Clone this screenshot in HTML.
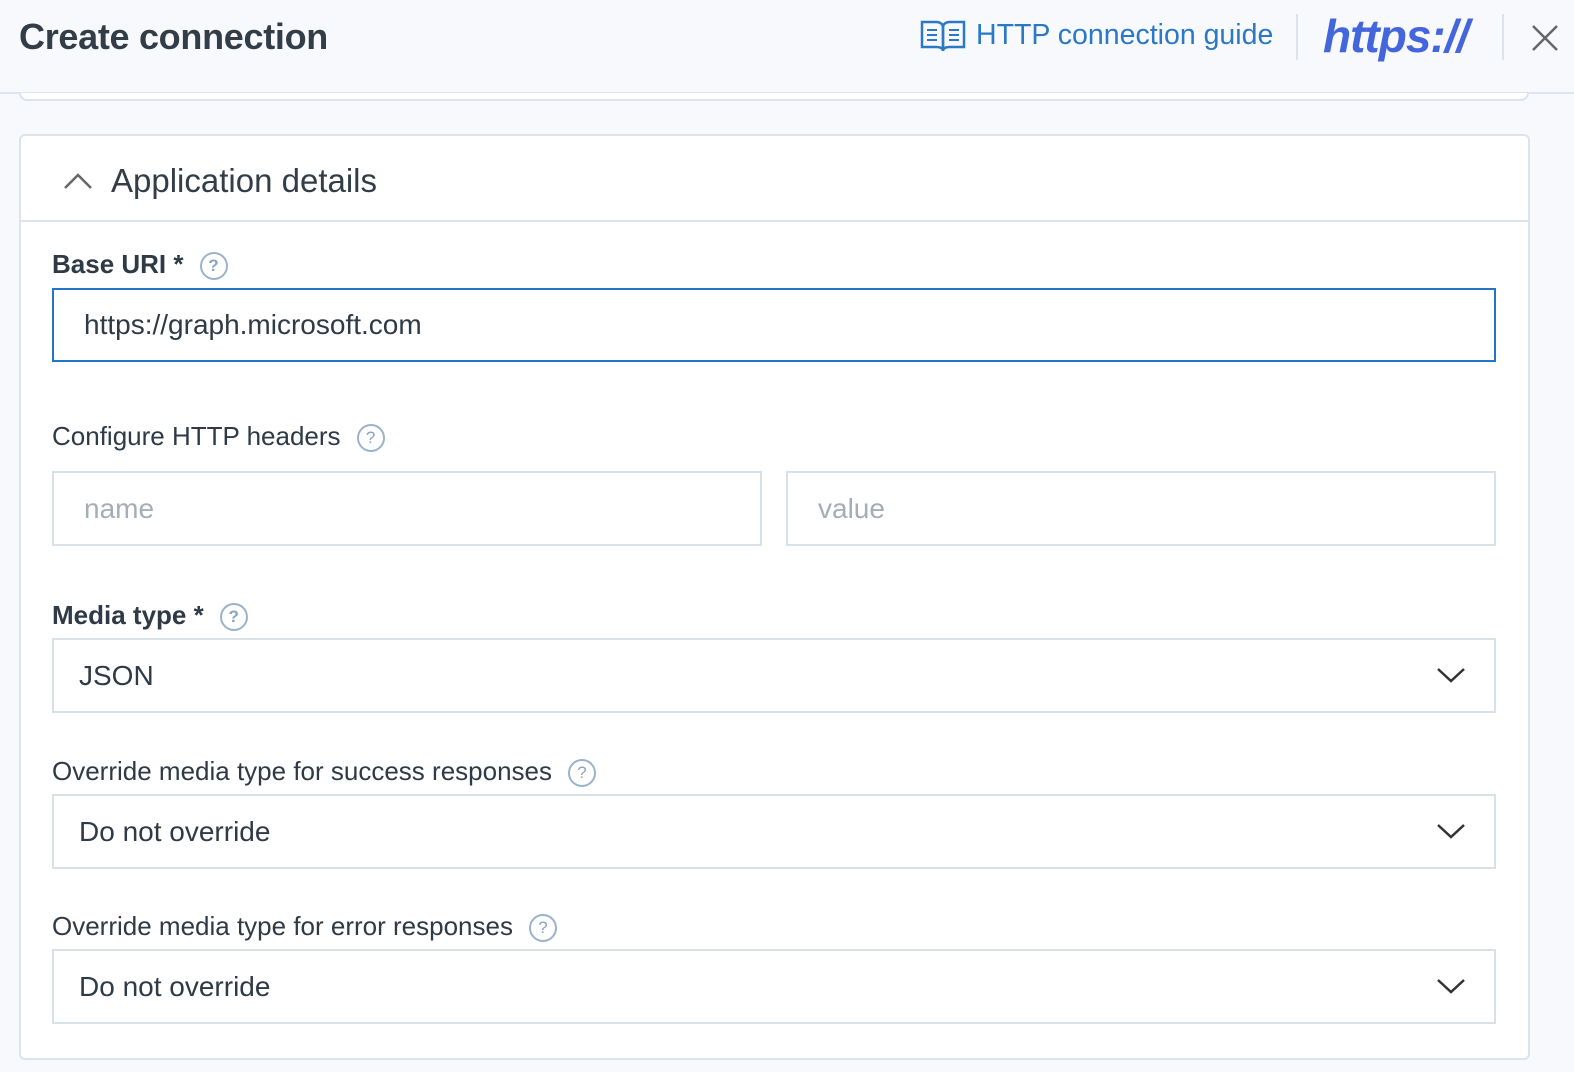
<!DOCTYPE html>
<html style="overflow:hidden"><head><style>
*{box-sizing:border-box;margin:0;padding:0}
html,body{width:1574px;height:1072px;overflow:hidden}
body{background:#f7f9fd;font-family:"Liberation Sans",sans-serif;color:#2e3a46;position:relative}
.a{position:absolute}
.title{left:19px;top:16px;font-size:36px;font-weight:bold;color:#333d48;letter-spacing:-0.3px}
.hdrline{left:0;top:92px;width:1574px;height:2px;background:#dde5ee}
.prev{left:19px;top:93px;width:1510px;height:8px;border:2px solid #dbe4ed;border-top:none;border-radius:0 0 8px 8px;background:#fff}
.card{left:19px;top:134px;width:1511px;height:926px;background:#fff;border:2px solid #dbe4ed;border-radius:6px}
.sep{left:19px;top:220px;width:1511px;height:2px;background:#dbe4ed}
.lbl{font-size:26px;color:#2e3a46}
.b{font-weight:bold}
.q{display:inline-block;width:28px;height:28px;border:2px solid #9ab3cc;border-radius:50%;color:#8aa3bc;font-size:17px;text-align:center;line-height:24px;vertical-align:middle;margin-left:16px}
.inp{border:2px solid #d8e0e8;background:#fff;font-size:28px;padding-left:30px;display:flex;align-items:center}
.sel{padding-left:25px}
.chev{position:absolute;right:28px;top:26px}
</style></head><body>
<div class="a title">Create connection</div>
<svg class="a" style="left:920px;top:18px" width="46" height="36" viewBox="0 0 46 36" fill="none" stroke="#2a78c6" stroke-width="2.5"><path d="M2 4h14c4 0 7 2 7 5v24c0-3-3-4-7-4H2z"/><path d="M44 4H30c-4 0-7 2-7 5v24c0-3 3-4 7-4h14z"/><path d="M7 12h10M7 17h10M7 22h10M29 12h10M29 17h10M29 22h10" stroke-width="2"/></svg>
<div class="a" style="left:976px;top:19px;font-size:28.5px;color:#2a78c6">HTTP connection guide</div>
<div class="a" style="left:1296px;top:14px;width:2px;height:46px;background:#dde3ea"></div>
<div class="a" style="left:1323px;top:9px;font-size:46px;font-weight:bold;font-style:italic;color:#4466dd;letter-spacing:-1px">https://</div>
<div class="a" style="left:1502px;top:14px;width:2px;height:46px;background:#dde3ea"></div>
<svg class="a" style="left:1531px;top:24px" width="28" height="28" viewBox="0 0 28 28" stroke="#666" stroke-width="2.5"><path d="M2 2l24 24M26 2L2 26"/></svg>
<div class="a hdrline"></div>
<div class="a prev"></div>
<div class="a card"></div>
<svg class="a" style="left:63px;top:170px" width="30" height="20" viewBox="0 0 30 20" fill="none" stroke="#666" stroke-width="2.5"><path d="M2 18L15 5l13 13"/></svg>
<div class="a" style="left:111px;top:162px;font-size:33px;color:#333d48">Application details</div>
<div class="a sep"></div>

<div class="a lbl b" style="left:52px;top:249px">Base URI *<span class="q">?</span></div>
<div class="a inp" style="left:52px;top:288px;width:1444px;height:74px;border-color:#2474c8;color:#2e3a46">https://graph.microsoft.com</div>

<div class="a lbl" style="left:52px;top:421px">Configure HTTP headers<span class="q">?</span></div>
<div class="a inp" style="left:52px;top:471px;width:710px;height:75px;color:#a5adb6">name</div>
<div class="a inp" style="left:786px;top:471px;width:710px;height:75px;color:#a5adb6">value</div>

<div class="a lbl b" style="left:52px;top:600px">Media type *<span class="q">?</span></div>
<div class="a inp sel" style="left:52px;top:638px;width:1444px;height:75px">JSON<svg class="chev" width="30" height="18" viewBox="0 0 30 18" fill="none" stroke="#333" stroke-width="2.5"><path d="M2 3l13 12L28 3"/></svg></div>

<div class="a lbl" style="left:52px;top:756px">Override media type for success responses<span class="q">?</span></div>
<div class="a inp sel" style="left:52px;top:794px;width:1444px;height:75px">Do not override<svg class="chev" width="30" height="18" viewBox="0 0 30 18" fill="none" stroke="#333" stroke-width="2.5"><path d="M2 3l13 12L28 3"/></svg></div>

<div class="a lbl" style="left:52px;top:911px">Override media type for error responses<span class="q">?</span></div>
<div class="a inp sel" style="left:52px;top:949px;width:1444px;height:75px">Do not override<svg class="chev" width="30" height="18" viewBox="0 0 30 18" fill="none" stroke="#333" stroke-width="2.5"><path d="M2 3l13 12L28 3"/></svg></div>
</body></html>
